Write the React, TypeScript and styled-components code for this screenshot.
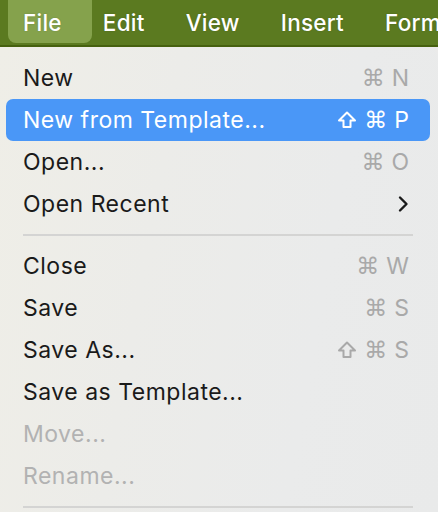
import React from "react";
import styled, { createGlobalStyle } from "styled-components";

const Global = createGlobalStyle`
  html, body { margin: 0; padding: 0; }
  body {
    width: 438px; height: 512px; overflow: hidden;
    font-family: Inter, "Noto Sans", "DejaVu Sans", sans-serif;
    background: #ebebea;
  }
`;

const Page = styled.div`
  display: flex;
  flex-direction: column;
  width: 438px;
  height: 512px;
  overflow: hidden;
`;

const MenuBar = styled.div`
  display: flex;
  align-items: center;
  height: 45px;
  padding-left: 2px;
  background: #5b7a20;
  border-bottom: 2px solid #46610f;
  flex-shrink: 0;
  overflow: hidden;
`;

const Title = styled.div<{ $active?: boolean }>`
  position: relative;
  height: 45px;
  display: flex;
  align-items: center;
  padding: 0 20px 0 21px;
  color: #ffffff;
  font-size: 22.5px;
  font-weight: 500;
  letter-spacing: 0.25px;
  white-space: nowrap;
  text-shadow: 0 0 2px rgba(0, 0, 0, 0.15);
  &::before {
    content: "";
    display: ${(p) => (p.$active ? "block" : "none")};
    position: absolute;
    left: 6px;
    right: -10px;
    top: 0;
    bottom: 2px;
    background: #85a24c;
    border-radius: 0 0 8px 8px;
    z-index: 0;
  }
  span { position: relative; z-index: 1; }
`;

const Menu = styled.div`
  flex: 1;
  display: flex;
  flex-direction: column;
  padding: 10px 8px 0 6px;
  background: linear-gradient(100deg, #efeee7 0%, #ecece9 35%, #eaebeb 70%, #e9eaea 100%);
  border-top-right-radius: 10px;
`;

const Item = styled.div<{ $selected?: boolean; $disabled?: boolean }>`
  height: 42px;
  display: flex;
  align-items: center;
  justify-content: space-between;
  padding: 0 21px 0 17px;
  border-radius: 7px;
  font-size: 23px;
  letter-spacing: 0.5px;
  background: ${(p) => (p.$selected ? "#4a97f7" : "transparent")};
  color: ${(p) => (p.$selected ? "#ffffff" : p.$disabled ? "#b2b2b2" : "#1a1a1a")};
  white-space: nowrap;
`;

const Shortcut = styled.div<{ $selected?: boolean }>`
  display: flex;
  align-items: center;
  gap: 7px;
  color: ${(p) => (p.$selected ? "#ffffff" : "#a9a9a9")};
  font-size: 23px;
  letter-spacing: 0;
`;

const Glyph = styled.span`
  font-family: "DejaVu Sans", sans-serif;
  font-size: 23px;
  line-height: 1;
`;

const Separator = styled.div`
  height: 20px;
  display: flex;
  align-items: center;
  padding: 0 17px 0 17px;
  &::after {
    content: "";
    flex: 1;
    height: 2px;
    background: #d4d4d3;
  }
`;

const Chevron = () => (
  <svg width="12" height="18" viewBox="0 0 12 18" fill="none">
    <path d="M3 2.5 L9.5 9 L3 15.5" stroke="#1a1a1a" strokeWidth="2.4" strokeLinecap="round" strokeLinejoin="round" />
  </svg>
);

const ShiftIcon = ({ color }: { color: string }) => (
  <svg width="20" height="20" viewBox="0 0 20 20" fill="none">
    <path d="M10 2.5 L18 10.5 L13.5 10.5 L13.5 17 L6.5 17 L6.5 10.5 L2 10.5 Z" stroke={color} strokeWidth="2" strokeLinejoin="round" />
  </svg>
);

type Row =
  | { kind: "sep" }
  | { kind: "item"; label: string; keys?: string; shift?: boolean; sub?: boolean; selected?: boolean; disabled?: boolean };

const rows: Row[] = [
  { kind: "item", label: "New", keys: "N" },
  { kind: "item", label: "New from Template...", keys: "P", shift: true, selected: true },
  { kind: "item", label: "Open...", keys: "O" },
  { kind: "item", label: "Open Recent", sub: true },
  { kind: "sep" },
  { kind: "item", label: "Close", keys: "W" },
  { kind: "item", label: "Save", keys: "S" },
  { kind: "item", label: "Save As...", keys: "S", shift: true },
  { kind: "item", label: "Save as Template..." },
  { kind: "item", label: "Move...", disabled: true },
  { kind: "item", label: "Rename...", disabled: true },
  { kind: "sep" },
];

export default function App() {
  return (
    <>
      <Global />
      <Page>
        <MenuBar>
          {["File", "Edit", "View", "Insert", "Format"].map((t, i) => (
            <Title key={t} $active={i === 0}>
              <span>{t}</span>
            </Title>
          ))}
        </MenuBar>
        <Menu>
          {rows.map((r, i) =>
            r.kind === "sep" ? (
              <Separator key={i} />
            ) : (
              <Item key={i} $selected={r.selected} $disabled={r.disabled}>
                <span>{r.label}</span>
                {r.keys && (
                  <Shortcut $selected={r.selected}>
                    {r.shift && <ShiftIcon color={r.selected ? "#ffffff" : "#a9a9a9"} />}
                    <Glyph>⌘</Glyph>
                    <span>{r.keys}</span>
                  </Shortcut>
                )}
                {r.sub && <Chevron />}
              </Item>
            )
          )}
        </Menu>
      </Page>
    </>
  );
}
